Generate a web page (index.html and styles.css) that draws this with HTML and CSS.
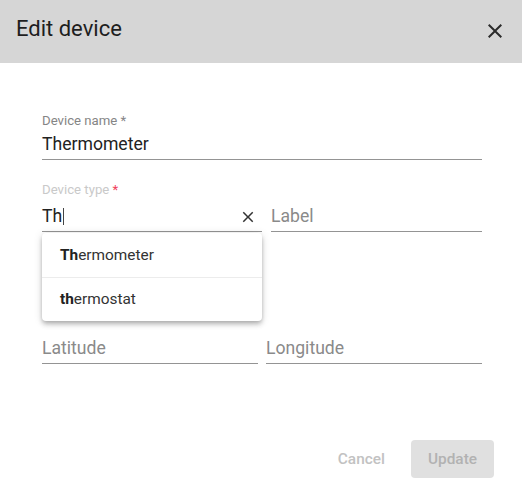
FILE: index.html
```html
<!DOCTYPE html>
<html>
<head>
<meta charset="utf-8">
<link rel="stylesheet" href="styles.css">
</head>
<body>
<div class="dialog">
  <header class="header">
    <h1 class="title">Edit device</h1>
    <svg class="close" viewBox="0 0 24 24" width="24" height="24"><path d="M19 6.41L17.59 5 12 10.59 6.41 5 5 6.41 10.59 12 5 17.59 6.41 19 12 13.41 17.59 19 19 17.59 13.41 12z"/></svg>
  </header>
  <main class="content">
    <div class="field">
      <div class="label">Device name *</div>
      <div class="input">Thermometer</div>
    </div>
    <div class="row row-type">
      <div class="field auto">
        <div class="label label-faint">Device type <span class="req">*</span></div>
        <div class="input input-pad"><span>Th</span><span class="caret"></span><svg class="clear" viewBox="0 0 24 24" width="18" height="18"><path d="M19 6.41L17.59 5 12 10.59 6.41 5 5 6.41 10.59 12 5 17.59 6.41 19 12 13.41 17.59 19 19 17.59 13.41 12z"/></svg></div>
        <ul class="menu">
          <li class="option"><b>Th</b>ermometer</li>
          <li class="option"><b>th</b>ermostat</li>
        </ul>
      </div>
      <div class="field">
        <div class="label"></div>
        <div class="input input-pad placeholder">Label</div>
      </div>
    </div>
    <div class="row row-geo">
      <div class="field">
        <div class="label"></div>
        <div class="input input-geo placeholder">Latitude</div>
      </div>
      <div class="field">
        <div class="label"></div>
        <div class="input input-geo placeholder">Longitude</div>
      </div>
    </div>
  </main>
  <footer class="actions">
    <button class="btn btn-text">Cancel</button>
    <button class="btn btn-filled">Update</button>
  </footer>
</div>
</body>
</html>
```
FILE: styles.css
```css
* { box-sizing: border-box; }
html, body { margin: 0; padding: 0; background: #fff; }
body { font-family: Roboto, "Liberation Sans", sans-serif; width: 522px; height: 484px; overflow: hidden; }
.dialog { display: flex; flex-direction: column; height: 484px; }
.header {
  height: 63px; background: #d6d6d6; display: flex; align-items: flex-start;
  justify-content: space-between; padding: 16px 16px 0 16px; flex: none;
}
.title { margin: 0; font-size: 22px; line-height: 25px; font-weight: 400; color: #1e1e1e; }
.close { fill: #2b2b2b; margin-top: 2.5px; margin-right: -0.5px; }
.content { padding: 50px 40px 0 42px; flex: 1; }
.field { display: flex; flex-direction: column; position: relative; }
.label { font-size: 13.2px; line-height: 16px; height: 16px; color: #858585; margin-bottom: 3px; white-space: nowrap; }
.label-faint { color: #c9c9c9; }
.req { color: #f0405a; }
.input {
  font-size: 17.6px; line-height: 24px; color: #222; padding-bottom: 3px;
  border-bottom: 1px solid #949494; display: flex; align-items: center; height: 28px;
}
.input-pad { padding-top: 3px; height: 31px; }
.placeholder { color: #8a8a8a; }
.caret { width: 1px; height: 17px; background: #444; margin-left: 1px; }
.clear { fill: #333; margin-left: auto; margin-right: 5px; margin-top: 1px; }
.row { display: grid; }
.row-type { grid-template-columns: 220px 211px; column-gap: 9px; margin-top: 22px; }
.row-geo { grid-template-columns: 216px 216px; column-gap: 8px; margin-top: 85px; }
.input-geo { height: 28px; padding-bottom: 4px; }
.menu {
  position: absolute; left: 0; right: 0; top: 51px; margin: 0; padding: 0; list-style: none;
  background: #fff; border-radius: 4px; z-index: 5;
  box-shadow: 0 2px 4px -1px rgba(0,0,0,.2), 0 4px 5px 0 rgba(0,0,0,.14), 0 1px 10px 0 rgba(0,0,0,.12);
}
.option { height: 44px; line-height: 44px; padding-left: 18px; font-size: 15.4px; color: #333; }
.option b { font-weight: 700; color: #222; }
.option + .option { border-top: 1px solid #ececec; height: 44px; line-height: 42px; }
.actions { display: flex; justify-content: flex-end; align-items: center; gap: 9px; padding: 0 28px 6px 0; flex: none; }
.btn {
  font-family: Roboto, "Liberation Sans", sans-serif; font-size: 15.4px; font-weight: 500;
  height: 38px; padding: 0 17px; border: none; border-radius: 4px; background: transparent;
}
.btn-text { color: #c2c2c2; }
.btn-filled { background: #e0e0e0; color: #b2b2b2; }
```
